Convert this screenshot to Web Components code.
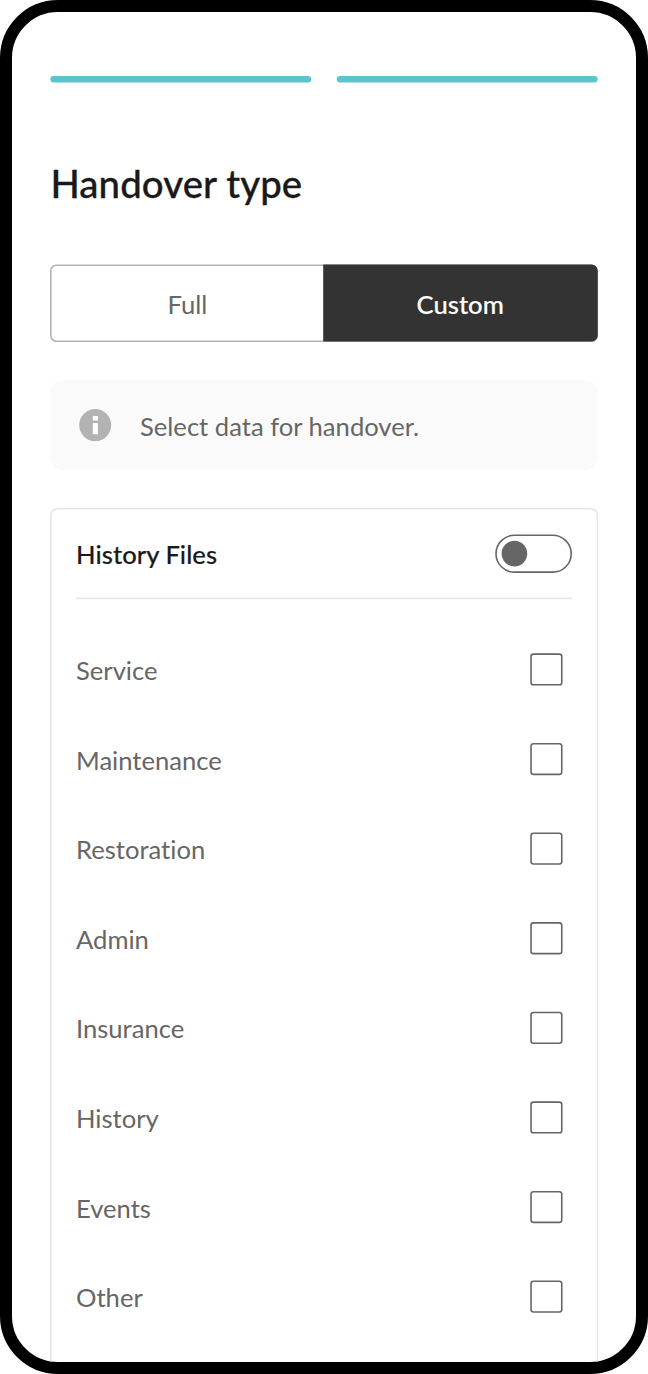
<!DOCTYPE html>
<html lang="en">
<head>
<meta charset="utf-8">
<title>Handover type</title>
<style>
html,body{margin:0;background:#fff}
body{font-family:Lato,"Liberation Sans",sans-serif;color:#666;font-variant-ligatures:none}
</style>
</head>
<body>
<device-frame>
  <step-progress></step-progress>
  <page-title>Handover type</page-title>
  <segmented-control>
    <segment-option>Full</segment-option>
    <segment-option selected>Custom</segment-option>
  </segmented-control>
  <info-note>Select data for handover.</info-note>
  <option-card>
    <span slot="title">History Files</span>
    <check-row>Service</check-row>
    <check-row>Maintenance</check-row>
    <check-row>Restoration</check-row>
    <check-row>Admin</check-row>
    <check-row>Insurance</check-row>
    <check-row>History</check-row>
    <check-row>Events</check-row>
    <check-row>Other</check-row>
  </option-card>
</device-frame>
<script>
const define = (name, html) => customElements.define(name, class extends HTMLElement {
  constructor() {
    super();
    const t = document.createElement('template');
    t.innerHTML = html;
    this.attachShadow({ mode: 'open' }).append(t.content.cloneNode(true));
  }
});

// The screen is authored on a 390-unit-wide grid and scaled by 1.6 inside the bezel.
define('device-frame', `<style>
:host{display:block;box-sizing:border-box;width:648px;height:1374px;border:12px solid #000;border-radius:58px;background:#fff;overflow:hidden}
.screen{box-sizing:border-box;width:390px;height:843.75px;padding:40px 24px 0;transform:scale(1.6);transform-origin:0 0;display:flex;flex-direction:column;font-size:16px;line-height:24px;overflow:hidden}
</style><div class="screen"><slot></slot></div>`);

define('step-progress', `<style>
:host{display:grid;grid-template-columns:1fr 1fr;gap:16px;height:4px;flex:none}
i{background:#5dc4cc;border-radius:2px}
</style><i></i><i></i>`);

define('page-title', `<style>
:host{display:block;flex:none;margin-top:47px;font-size:24px;line-height:32px;font-weight:500;color:#1a1a1a;letter-spacing:.05px;-webkit-text-stroke:.18px #1a1a1a;transform:translateY(.3px)}
</style><slot></slot>`);

// Outline and selected fill are drawn behind the two option labels.
define('segmented-control', `<style>
:host{display:flex;flex:none;height:48px;margin-top:35px;position:relative}
svg{position:absolute;inset:0;overflow:visible}
</style><svg width="342" height="48"><rect x=".25" y=".25" width="341.5" height="47.5" rx="3.5" fill="#fff" stroke="#b3b3b3"/><path fill="#333" d="M170.5-.25H338a4 4 0 0 1 4.1 4V44a4 4 0 0 1-4.1 4H170.5z"/></svg><slot></slot>`);

define('segment-option', `<style>
:host{flex:1;box-sizing:border-box;display:flex;align-items:center;justify-content:center;position:relative;transform:translate(.4px,.5px)}
:host([selected]){color:#fff;font-weight:500;-webkit-text-stroke:.1px #fff;padding-right:1px}
</style><slot></slot>`);

define('info-note', `<style>
:host{display:flex;flex:none;align-items:center;gap:16px;box-sizing:border-box;height:56px;margin-top:24px;padding:0 16px;border-radius:8px;background:#fafafa;box-shadow:0 .3px 0 #fafafa}
svg{width:24px;height:24px;flex:none}
span{padding-top:2px}
</style><svg viewBox="0 0 24 24"><circle cx="12" cy="12.2" r="10" fill="#b3b3b3"/><path fill="#fff" d="M10.5 6.5h3.2v2.8h-3.2zM10.5 10.8h3.2v7.1h-3.2z"/></svg><span><slot></slot></span>`);

define('toggle-switch', `<style>
:host{display:block;flex:none;width:48px;height:24px}
svg{display:block;overflow:visible}
</style><svg width="48" height="24" viewBox="0 0 48 24"><rect x=".5" y="0" width="47" height="23.1" rx="11.55" fill="#fff" stroke="#666"/><circle cx="12" cy="11.5" r="8" fill="#666"/></svg>`);

define('option-card', `<style>
:host{display:block;flex:none;box-sizing:border-box;height:600px;margin-top:24px;padding:1px 16px;position:relative}
.outline{position:absolute;inset:0;overflow:visible}
header,.rows{position:relative}
header{display:flex;box-sizing:border-box;height:56px;align-items:center;justify-content:space-between;border-bottom:1px solid #e6e6e6;color:#1a1a1a;font-weight:500}
header div{padding-top:1px;letter-spacing:.03px;-webkit-text-stroke:.1px #1a1a1a;transform:translateY(.2px)}
.rows{padding-top:16px}
</style><svg class="outline" width="342" height="600"><rect x=".25" y=".45" width="341.7" height="599" rx="4" fill="none" stroke="#e6e6e6"/></svg><header><div><slot name="title"></slot></div><toggle-switch></toggle-switch></header><div class="rows"><slot></slot></div>`);

define('check-row', `<style>
:host{display:flex;align-items:center;justify-content:space-between;height:56px;padding-right:6px}
span{transform:translateY(.5px)}
svg{display:block;flex:none;overflow:visible}
</style><span><slot></slot></span><svg width="20" height="20" viewBox="0 0 20 20"><rect x=".4" y=".3" width="19.2" height="19.2" rx="1.5" fill="#fff" stroke="#666"/></svg>`);
</script>
</body>
</html>
